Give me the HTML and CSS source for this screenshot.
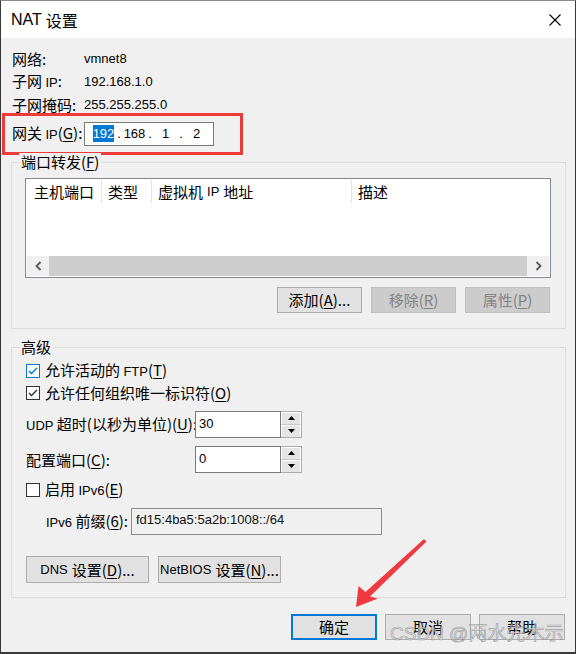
FILE: index.html
```html
<!DOCTYPE html>
<html lang="zh-CN">
<head>
<meta charset="utf-8">
<title>NAT 设置</title>
<link rel="stylesheet" href="styles.css">
</head>
<body>
<div class="window">
  <div class="titlebar">
    <div class="title"><span class="title-en">NAT</span> <span class="zh title-zh">设置</span></div>
    <svg class="close" width="12" height="12" viewBox="0 0 12 12"><path d="M0.5 0.5 L11.5 11.5 M11.5 0.5 L0.5 11.5" stroke="#000" stroke-width="1.1" fill="none"/></svg>
  </div>

  <div class="content">
    <div class="info">
      <div class="row"><span class="lbl zh">网络:</span><span class="val">vmnet8</span></div>
      <div class="row"><span class="lbl zh">子网 <span class="en">IP</span>:</span><span class="val">192.168.1.0</span></div>
      <div class="row"><span class="lbl zh">子网掩码:</span><span class="val">255.255.255.0</span></div>
      <div class="gateway">
        <span class="lbl zh">网关 <span class="en">IP</span>(<u>G</u>):</span>
        <div class="ipbox">
          <span class="seg"><span class="sel">192</span></span><span class="dot">.</span><span class="seg">168</span><span class="dot">.</span><span class="seg">1</span><span class="dot">.</span><span class="seg">2</span>
        </div>
      </div>
    </div>

    <div class="group port">
      <div class="legend zh">端口转发(<u>F</u>)</div>
      <div class="listview">
        <div class="lv-head zh">
          <div class="col c1">主机端口</div>
          <div class="col c2">类型</div>
          <div class="col c3">虚拟机 <span class="en">IP</span> 地址</div>
          <div class="col c4">描述</div>
        </div>
        <div class="lv-body"></div>
        <div class="hscroll">
          <div class="sb-btn"><svg width="7" height="10" viewBox="0 0 7 10"><polyline points="5.5,1 1.5,5 5.5,9" fill="none" stroke="#5a5a5a" stroke-width="1.8"/></svg></div>
          <div class="sb-track"></div>
          <div class="sb-btn"><svg width="7" height="10" viewBox="0 0 7 10"><polyline points="1.5,1 5.5,5 1.5,9" fill="none" stroke="#5a5a5a" stroke-width="1.8"/></svg></div>
        </div>
      </div>
      <div class="btnrow">
        <div class="btn zh">添加(<u>A</u>)...</div>
        <div class="btn disabled zh">移除(<u>R</u>)</div>
        <div class="btn disabled zh">属性(<u>P</u>)</div>
      </div>
    </div>

    <div class="group adv">
      <div class="legend zh">高级</div>
      <div class="cbrow first">
        <span class="cb focus"><svg width="12" height="12" viewBox="0 0 12 12"><polyline points="2,6 4.5,8.5 10,3" fill="none" stroke="#0078d7" stroke-width="1.4"/></svg></span>
        <span class="zh">允许活动的 <span class="en">FTP</span>(<u>T</u>)</span>
      </div>
      <div class="cbrow">
        <span class="cb"><svg width="12" height="12" viewBox="0 0 12 12"><polyline points="2,6 4.5,8.5 10,3" fill="none" stroke="#333" stroke-width="1.4"/></svg></span>
        <span class="zh">允许任何组织唯一标识符(<u>O</u>)</span>
      </div>
      <div class="spinrow first">
        <span class="slbl zh"><span class="en">UDP</span> 超时(以秒为单位)(<u>U</u>):</span>
        <div class="spin">
          <div class="field">30</div>
          <div class="spinbtns">
            <div class="sbtn"><svg width="7" height="4" viewBox="0 0 7 4"><polygon points="0,4 3.5,0 7,4" fill="#000"/></svg></div>
            <div class="sbtn"><svg width="7" height="4" viewBox="0 0 7 4"><polygon points="0,0 7,0 3.5,4" fill="#000"/></svg></div>
          </div>
        </div>
      </div>
      <div class="spinrow">
        <span class="slbl zh">配置端口(<u>C</u>):</span>
        <div class="spin">
          <div class="field">0</div>
          <div class="spinbtns">
            <div class="sbtn"><svg width="7" height="4" viewBox="0 0 7 4"><polygon points="0,4 3.5,0 7,4" fill="#000"/></svg></div>
            <div class="sbtn"><svg width="7" height="4" viewBox="0 0 7 4"><polygon points="0,0 7,0 3.5,4" fill="#000"/></svg></div>
          </div>
        </div>
      </div>
      <div class="cbrow ipv6">
        <span class="cb"></span>
        <span class="zh">启用 <span class="en">IPv6</span>(<u>E</u>)</span>
      </div>
      <div class="prefixrow">
        <span class="plbl zh"><span class="en">IPv6</span> 前缀(<u>6</u>):</span>
        <div class="prefix">fd15:4ba5:5a2b:1008::/64</div>
      </div>
      <div class="dnsrow">
        <div class="btn wide zh"><span class="en">DNS</span> 设置(<u>D</u>)...</div>
        <div class="btn wide zh"><span class="en">NetBIOS</span> 设置(<u>N</u>)...</div>
      </div>
    </div>

    <div class="footer">
      <div class="btn default zh">确定</div>
      <div class="btn zh">取消</div>
      <div class="btn zh">帮助</div>
    </div>
  </div>

  <svg class="arrow" width="576" height="654" viewBox="0 0 576 654">
    <polygon points="356,607 358.5,586 365.5,592 424,539 426.5,541.5 370,596.5 378,598.5" fill="#ef3b3f"/>
  </svg>
  <div class="watermark">CSDN @两水先木示</div>
</div>
</body>
</html>
```
FILE: styles.css
```css
* { box-sizing: border-box; }
html, body { margin: 0; padding: 0; }
body {
  font-family: "Liberation Sans", "Noto Sans CJK SC", sans-serif;
  font-size: 13px;
  color: #000;
  background: #fff;
}
u { text-decoration: underline; text-underline-offset: 2px; text-decoration-thickness: 1px; }

.zh { font-family: "Noto Sans CJK SC", sans-serif; font-size: 15px; }
.en { font-family: "Liberation Sans", sans-serif; font-size: 13px; }

.window {
  position: relative;
  width: 576px;
  height: 654px;
  border: 1px solid #3a3a3a;
  border-top-color: #8a8a8a;
  border-bottom-width: 2px;
  background: #f0f0f0;
  display: flex;
  flex-direction: column;
  overflow: hidden;
}

.titlebar {
  flex: none;
  height: 37px;
  background: #fff;
  display: flex;
  align-items: center;
  justify-content: space-between;
  padding: 0 14px 0 10px;
}
.title { display: flex; align-items: center; gap: 4px; }
.title-en { font-family: "Liberation Sans Narrow", "Liberation Sans", sans-serif; font-size: 16px; }
.title-zh { font-size: 16px; }
.close { display: block; }

.content { flex: 1; padding-top: 9px; }

.info { padding-left: 11px; }
.row { display: flex; align-items: center; height: 23px; line-height: 18px; }
.lbl { width: 72px; flex: none; line-height: 18px; }
.val { line-height: 16px; }

.gateway {
  display: flex;
  align-items: center;
  margin: -3px 0 0 -10px;
  width: 241px;
  height: 42px;
  border: 3px solid #ec3b3b;
  padding-left: 7px;
}
.ipbox {
  width: 130px;
  height: 24px;
  border: 1px solid #7a7a7a;
  background: #fff;
  display: flex;
  align-items: center;
  padding-left: 5px;
}
.seg { width: 27px; text-align: center; line-height: 16px; }
.dot { width: 4px; text-align: center; line-height: 16px; }
.sel { background: #0078d7; color: #fff; padding: 1px 0; }

.group {
  margin-left: 10px;
  width: 555px;
  border: 1px solid #dcdcdc;
}
.port { margin-top: 7px; padding-bottom: 15px; }
.adv { margin-top: 18px; padding-bottom: 14px; }
.legend {
  display: block;
  width: max-content;
  margin: -10px 0 0 7px;
  padding: 0 2px;
  line-height: 18px;
  height: 18px;
  background: #f0f0f0;
}

.listview {
  margin: 7px 14px 0 13px;
  height: 100px;
  border: 1px solid #828790;
  background: #fff;
  display: flex;
  flex-direction: column;
}
.lv-head { display: flex; height: 26px; flex: none; }
.col {
  display: flex;
  align-items: center;
  padding-left: 6px;
  border-right: 1px solid #e5e5e5;
  margin: 1px 0 2px;
  line-height: 18px;
  white-space: nowrap;
}
.c1 { width: 76px; padding-left: 8px; }
.c2 { width: 50px; }
.c3 { width: 200px; }
.c3 .en { margin: 0 4px; }
.c4 { flex: 1; border-right: none; }
.lv-body { flex: 1; }
.hscroll { display: flex; height: 20px; margin: 0 1px 1px 1px; flex: none; }
.sb-btn { width: 22px; background: #f0f0f0; display: flex; align-items: center; justify-content: center; }
.sb-track { flex: 1; background: #cdcdcd; }

.btnrow {
  display: flex;
  justify-content: flex-end;
  gap: 9px;
  margin: 9px 15px 0 0;
}
.btn {
  width: 85px;
  height: 26px;
  border: 1px solid #adadad;
  background: #e1e1e1;
  display: flex;
  align-items: center;
  justify-content: center;
  line-height: 18px;
  white-space: nowrap;
}
.btn.disabled { background: #cccccc; border-color: #bfbfbf; color: #838383; }
.btn .en { margin-right: 4px; }

.cbrow {
  display: flex;
  align-items: center;
  height: 22px;
  padding-left: 14px;
  gap: 5px;
  line-height: 18px;
}
.cbrow.first { margin-top: 4px; }
.cbrow.ipv6 { margin-top: 6px; }
.cb {
  width: 14px;
  height: 14px;
  border: 1px solid #333;
  background: #fff;
  display: flex;
  align-items: center;
  justify-content: center;
  flex: none;
}
.cb.focus { border-color: #0078d7; }
.cb svg { display: block; }

.spinrow {
  display: flex;
  align-items: center;
  height: 27px;
  padding-left: 14px;
  margin-top: 8px;
}
.spinrow.first { margin-top: 7px; }
.slbl { width: 169px; flex: none; line-height: 18px; white-space: nowrap; }
.spin { display: flex; width: 107px; height: 27px; }
.field {
  flex: 1;
  border: 1px solid #7a7a7a;
  background: #fff;
  padding: 4px 3px 0;
  line-height: 16px;
}
.spinbtns {
  width: 21px;
  display: flex;
  flex-direction: column;
  border: 1px solid #acacac;
  border-left: none;
  background: #fff;
}
.sbtn {
  flex: 1;
  display: flex;
  align-items: center;
  justify-content: center;
  background: #e5e5e5;
  border: 1px solid #fff;
  border-bottom-color: #c8c8c8;
}
.sbtn + .sbtn { border-top-color: #fff; border-bottom-color: #e5e5e5; }
.sbtn svg { display: block; }

.prefixrow {
  display: flex;
  align-items: center;
  height: 27px;
  margin-top: 7px;
  padding-left: 34px;
}
.plbl { width: 85px; flex: none; line-height: 18px; white-space: nowrap; }
.prefix {
  width: 251px;
  height: 27px;
  border: 1px solid #8c8c8c;
  background: #f0f0f0;
  padding: 3px 4px 0;
  line-height: 16px;
  color: #111;
}

.dnsrow {
  display: flex;
  gap: 9px;
  margin-top: 21px;
  padding-left: 14px;
}
.btn.wide { width: 123px; height: 27px; }

.footer {
  display: flex;
  justify-content: flex-end;
  gap: 8px;
  margin-top: 16px;
  padding-right: 10px;
}
.footer .btn { width: 86px; }
.btn.default { border: 2px solid #0078d7; }

.arrow { position: absolute; left: -1px; top: -1px; pointer-events: none; }
.watermark {
  position: absolute;
  left: 389px;
  top: 621px;
  font-family: "Liberation Sans", "Noto Sans CJK SC", sans-serif;
  font-size: 19px;
  line-height: 24px;
  color: rgba(225, 225, 225, 0.7);
  -webkit-text-stroke: 0.7px rgba(100, 100, 100, 0.5);
  white-space: nowrap;
  pointer-events: none;
}
```
